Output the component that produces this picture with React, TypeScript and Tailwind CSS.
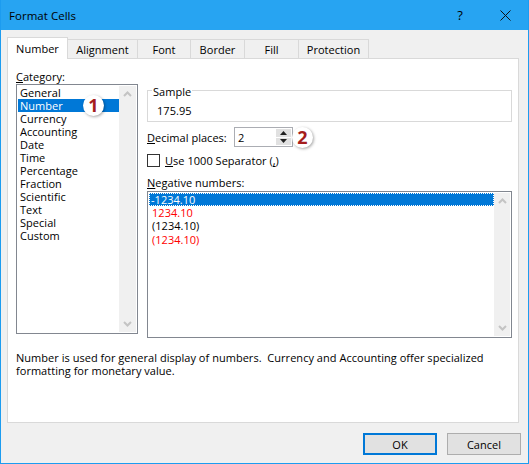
const categories = ["General", "Number", "Currency", "Accounting", "Date", "Time", "Percentage", "Fraction", "Scientific", "Text", "Special", "Custom"];
const tabs = [
  { label: "Alignment", w: "w-[70px]" },
  { label: "Font", w: "w-[53px]" },
  { label: "Border", w: "w-[54px]" },
  { label: "Fill", w: "w-[54px]" },
  { label: "Protection", w: "w-[70px]" },
];

const Chevron = ({ up }: { up?: boolean }) => (
  <svg width="9" height="7" viewBox="0 0 9 7" fill="none" stroke="#c4c4c4" strokeWidth="2">
    <path d={up ? "M1 6L4.5 2.5L8 6" : "M1 1L4.5 4.5L8 1"} />
  </svg>
);

const Scrollbar = ({ className }: { className: string }) => (
  <div className={`flex flex-col items-center justify-between bg-[#f0f0f0] py-1 ${className}`}>
    <Chevron up />
    <Chevron />
  </div>
);

const Badge = ({ n }: { n: string }) => (
  <div className="flex h-[21px] w-[21px] items-center justify-center rounded-full bg-white text-[18px] font-bold text-[#a51d1d] shadow-[1px_1px_3px_rgba(0,0,0,0.35)]">
    {n}
  </div>
);

export default function App() {
  return (
    <div className="flex h-[464px] w-[529px] flex-col overflow-hidden border border-t-0 border-[#1c9cf0] bg-[#f0f0f0] text-[11px] leading-[13px] tracking-[0.03px] text-black [font-family:'Open_Sans',sans-serif]">
      {/* title bar */}
      <div className="flex h-[30px] shrink-0 items-center bg-[#27a4f2] pl-[8px]">
        <span className="flex-1 text-[11.5px]">Format Cells</span>
        <span className="w-[14px] text-center text-[13px]">?</span>
        <svg className="ml-[33px] mr-[17px]" width="11" height="11" viewBox="0 0 11 11" stroke="#111" strokeWidth="1" fill="none">
          <path d="M0.5 0.5L10.5 10.5M10.5 0.5L0.5 10.5" />
        </svg>
      </div>

      {/* tabs */}
      <div className="flex h-[28px] shrink-0 items-end pl-[6px]">
        <div className="relative z-10 -mb-px flex h-[22px] w-[61px] items-center justify-center border border-b-0 border-[#d9d9d9] bg-white">Number</div>
        {tabs.map((t) => (
          <div key={t.label} className={`flex h-[19px] items-center justify-center border border-b-0 border-l-0 border-[#d9d9d9] ${t.w}`}>
            {t.label}
          </div>
        ))}
      </div>

      {/* panel */}
      <div className="relative ml-[6px] mr-[9px] h-[365px] shrink-0 border border-[#d9d9d9] bg-white pl-[8px] pt-[11px]">
        <div className="flex">
          <div className="w-[131px] shrink-0">
            <div className="h-[14px]"><u>C</u>ategory:</div>
            <div className="flex h-[250px] w-[122px] border border-[#828790] p-[1px]">
              <div className="flex-1">
                {categories.map((c) => (
                  <div key={c} className={`h-[13px] pl-[2px] ${c === "Number" ? "bg-[#0078d7] text-white" : ""}`}>{c}</div>
                ))}
              </div>
              <Scrollbar className="w-[17px]" />
            </div>
          </div>

          <div className="mt-[20px] w-[365px] shrink-0">
            {/* sample */}
            <div className="relative h-[32px] border border-[#d9d9d9] pl-[9px] pt-[13px]">
              <span className="absolute -top-[6px] left-[4px] bg-white px-[1px]">Sample</span>
              175.95
            </div>

            <div className="mt-[5px] flex h-[20px] items-center">
              <span className="w-[87px]"><u>D</u>ecimal places:</span>
              <div className="flex h-[20px] w-[59px] items-center border border-[#abadb3] pl-[3px]">
                <span className="flex-1">2</span>
                <div className="mr-px flex h-[16px] w-[15px] flex-col gap-px">
                  <div className="flex flex-1 items-center justify-center bg-[#e1e1e1]">
                    <svg width="7" height="4" viewBox="0 0 7 4"><path d="M3.5 0L7 4H0Z" fill="#222" /></svg>
                  </div>
                  <div className="flex flex-1 items-center justify-center bg-[#e1e1e1]">
                    <svg width="7" height="4" viewBox="0 0 7 4"><path d="M0 0H7L3.5 4Z" fill="#222" /></svg>
                  </div>
                </div>
              </div>
              <div className="-ml-[1px]"><Badge n="2" /></div>
            </div>

            <div className="mt-[7px] flex h-[13px] items-center">
              <div className="h-[13px] w-[13px] border border-[#333] bg-white" />
              <span className="ml-[5px]"><u>U</u>se 1000 Separator (<u>,</u>)</span>
            </div>

            <div className="mt-[9px] h-[13px]"><u>N</u>egative numbers:</div>
            <div className="mt-[2px] flex h-[147px] border border-[#828790] p-[1px]">
              <div className="flex-1">
                <div className="h-[13px] border border-dotted border-white bg-[#0078d7] pl-[1px] leading-[11px] text-white">-1234.10</div>
                <div className="h-[13px] pl-[3px] text-[#ff0000]">1234.10</div>
                <div className="h-[14px] pl-[3px]">(1234.10)</div>
                <div className="h-[13px] pl-[3px] text-[#ff0000]">(1234.10)</div>
              </div>
              <Scrollbar className="w-[16px]" />
            </div>
          </div>
        </div>

        <p className="mt-[13px]">
          Number is used for general display of numbers.&nbsp; Currency and Accounting offer specialized
          <br />
          formatting for monetary value.
        </p>

        <div className="absolute left-[75px] top-[36px]"><Badge n="1" /></div>
      </div>

      {/* footer */}
      <div className="flex flex-1 items-start justify-end gap-[10px] pr-[7px] pt-[10px]">
        <button className="h-[22px] w-[74px] border-2 border-[#0078d7] bg-[#e1e1e1]">OK</button>
        <button className="h-[22px] w-[74px] border border-[#adadad] bg-[#e1e1e1]">Cancel</button>
      </div>
    </div>
  );
}
